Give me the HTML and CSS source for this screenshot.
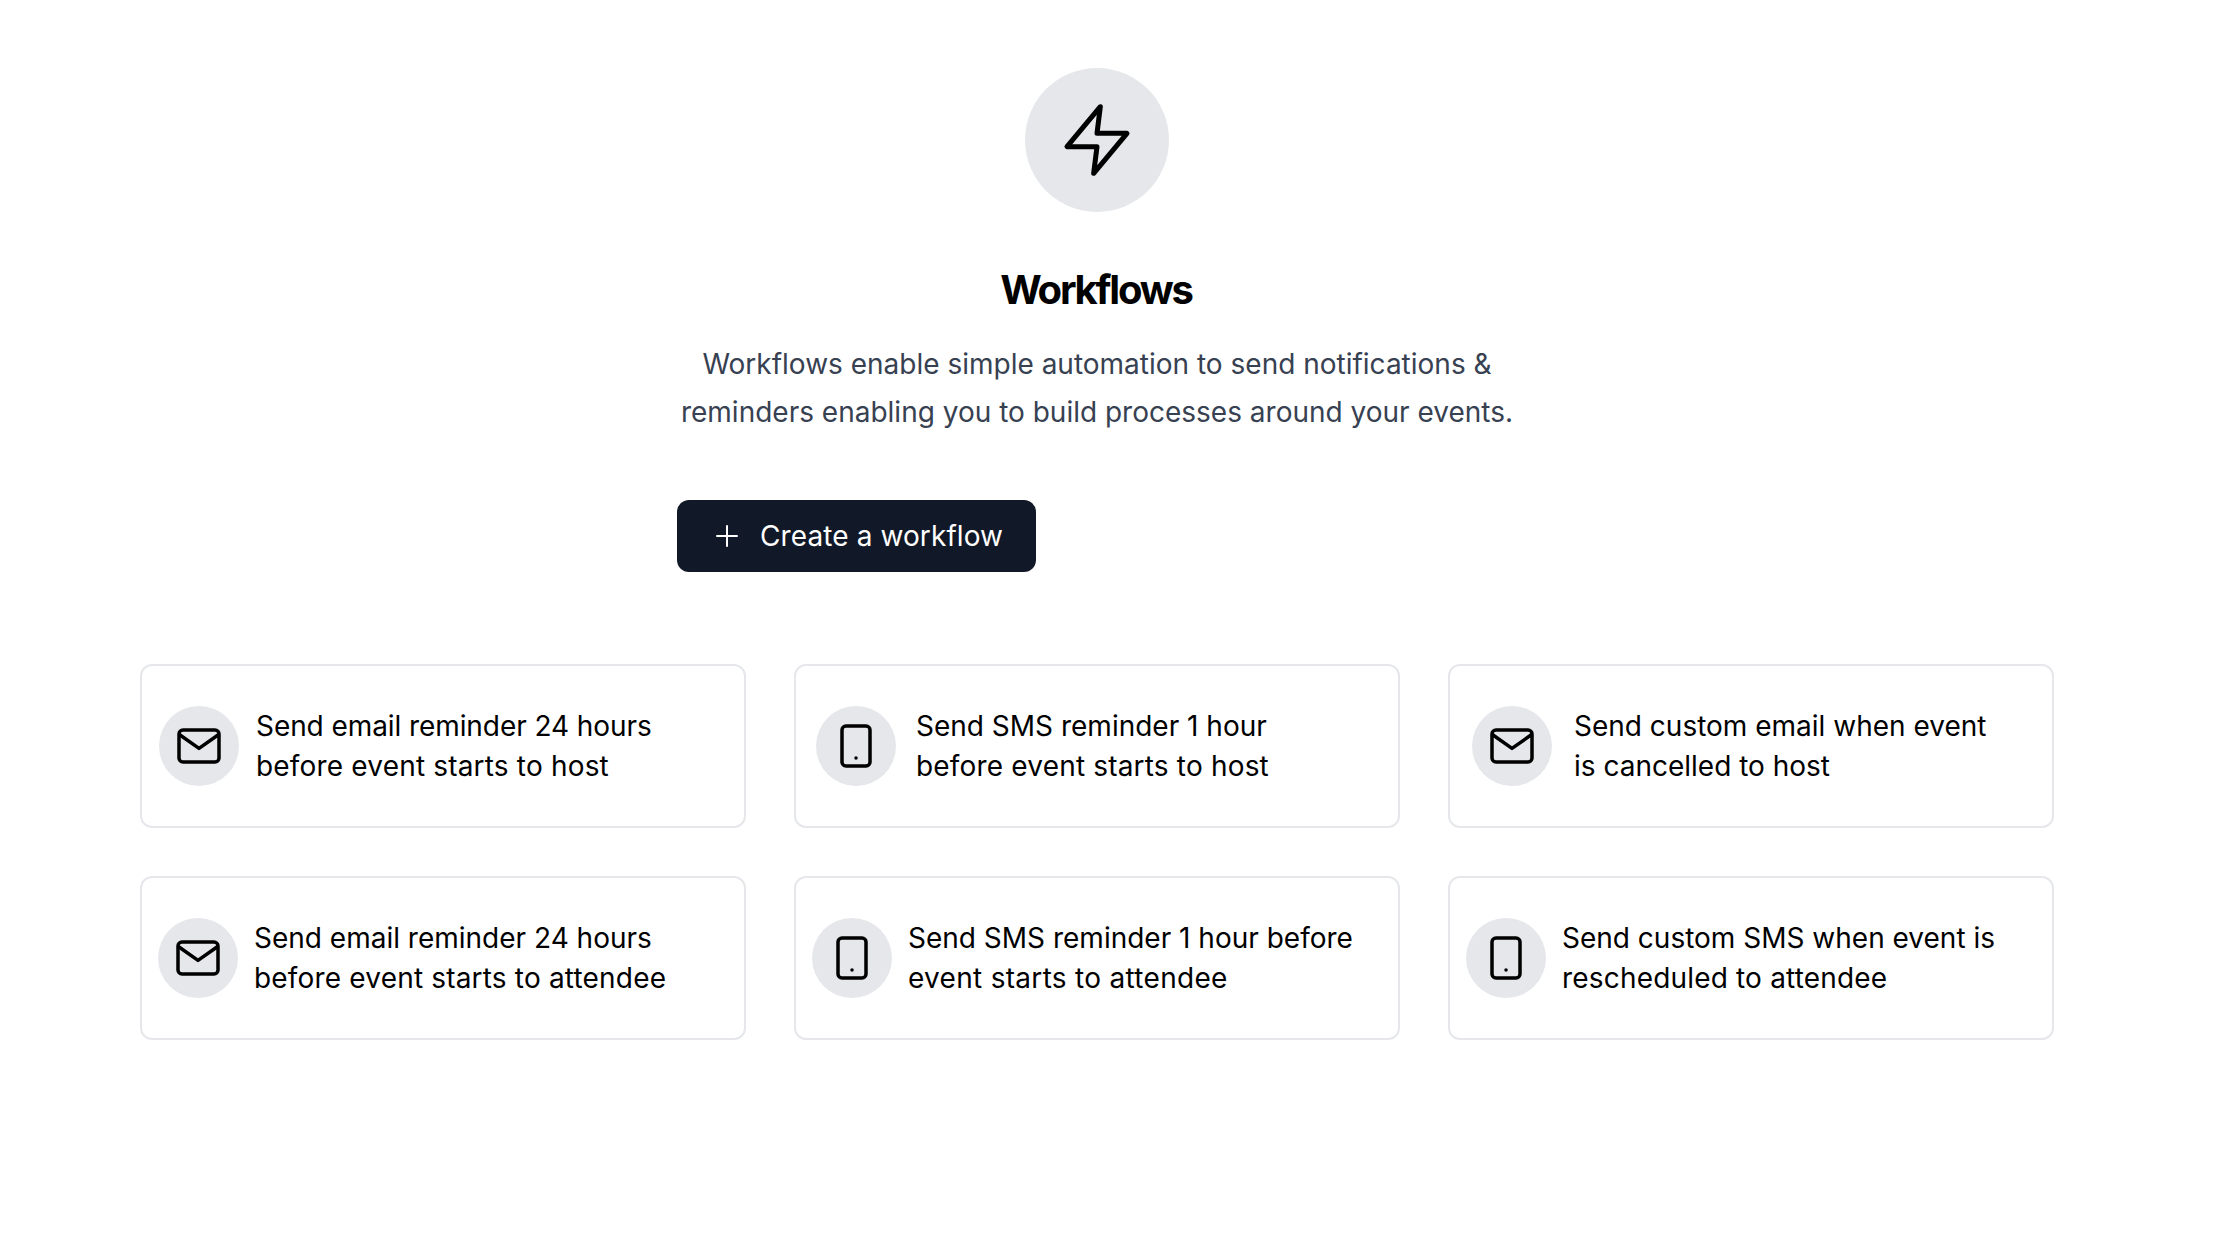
FILE: index.html
```html
<!DOCTYPE html>
<html lang="en">
<head>
<meta charset="utf-8">
<title>Workflows</title>
<link rel="stylesheet" href="styles.css">
</head>
<body>
<main class="page">
  <section class="hero">
    <div class="hero-icon">
      <svg class="icon-zap" viewBox="0 0 24 24"><path d="M13 2 3 14h9l-1 8 10-12h-9l1-8z"/></svg>
    </div>
    <h1 class="title">Workflows</h1>
    <p class="lead">Workflows enable simple automation to send notifications &amp;<br>reminders enabling you to build processes around your events.</p>
    <div class="actions">
      <button class="btn" type="button">
        <svg class="icon-plus" viewBox="0 0 24 24"><path d="M12 4.5v15M4.5 12h15"/></svg>
        <span>Create a workflow</span>
      </button>
    </div>
  </section>
  <section class="grid">
    <article class="card c1">
      <div class="badge"><svg class="icon" viewBox="0 0 24 24"><rect x="2" y="4" width="20" height="16" rx="2"/><path d="M2.5 6.5 12 13.2l9.5-6.7"/></svg></div>
      <p class="text"><span class="l1">Send email reminder 24 hours</span><br><span class="l2">before event starts to host</span></p>
    </article>
    <article class="card c2">
      <div class="badge"><svg class="icon" viewBox="0 0 24 24"><rect x="5" y="2" width="14" height="20" rx="2"/><path d="M12 18h.01"/></svg></div>
      <p class="text">Send SMS reminder 1 hour<br><span class="l2">before event starts to host</span></p>
    </article>
    <article class="card c3">
      <div class="badge"><svg class="icon" viewBox="0 0 24 24"><rect x="2" y="4" width="20" height="16" rx="2"/><path d="M2.5 6.5 12 13.2l9.5-6.7"/></svg></div>
      <p class="text">Send custom email when event<br>is cancelled to host</p>
    </article>
    <article class="card c4">
      <div class="badge"><svg class="icon" viewBox="0 0 24 24"><rect x="2" y="4" width="20" height="16" rx="2"/><path d="M2.5 6.5 12 13.2l9.5-6.7"/></svg></div>
      <p class="text">Send email reminder 24 hours<br><span class="l2">before event starts to attendee</span></p>
    </article>
    <article class="card c5">
      <div class="badge"><svg class="icon" viewBox="0 0 24 24"><rect x="5" y="2" width="14" height="20" rx="2"/><path d="M12 18h.01"/></svg></div>
      <p class="text">Send SMS reminder 1 hour before<br><span class="l2 l2-wide">event starts to attendee</span></p>
    </article>
    <article class="card c6">
      <div class="badge"><svg class="icon" viewBox="0 0 24 24"><rect x="5" y="2" width="14" height="20" rx="2"/><path d="M12 18h.01"/></svg></div>
      <p class="text">Send custom SMS when event is<br><span class="l2">rescheduled to attendee</span></p>
    </article>
  </section>
</main>
</body>
</html>
```
FILE: styles.css
```css
* { box-sizing: border-box; }
html, body { margin: 0; background: #fff; }
body { font-family: Inter, "Liberation Sans", sans-serif; color: #000; }
.page { width: 2194px; padding: 68px 140px 0; height: 1248px; overflow: hidden; }
.hero { display: flex; flex-direction: column; align-items: center; }
.hero-icon { width: 144px; height: 144px; border-radius: 50%; background: #e5e7eb; display: flex; align-items: center; justify-content: center; }
.icon-zap { width: 80px; height: 80px; fill: none; stroke: #000; stroke-width: 1.5; stroke-linecap: round; stroke-linejoin: round; }
.title { margin: 54px 0 0; padding-right: 2px; font-size: 40px; line-height: 48px; font-weight: 700; letter-spacing: -2.2px; }
.lead { margin: 26px 0 0; width: 840px; text-align: center; font-size: 28px; line-height: 48px; color: #374151; }
.actions { width: 840px; margin-top: 64px; display: flex; justify-content: flex-start; }
.btn { display: flex; align-items: center; height: 72px; width: 359px; padding: 0 0 0 34px; gap: 17px; border: 0; border-radius: 12px; background: #111827; color: #fff; font: 400 28px/40px Inter, sans-serif; letter-spacing: 0.1px; white-space: nowrap; }
.icon-plus { flex: none; width: 32px; height: 32px; fill: none; stroke: #fff; stroke-width: 1.5; stroke-linecap: round; }
.grid { margin-top: 92px; display: grid; grid-template-columns: repeat(3, 606px); gap: 48px; }
.card { height: 164px; border: 2px solid #e5e7eb; border-radius: 12px; background: #fff; display: flex; align-items: center; }
.badge { flex: none; width: 80px; height: 80px; border-radius: 50%; background: #e5e7eb; display: flex; align-items: center; justify-content: center; }
.icon { width: 48px; height: 48px; fill: none; stroke: #000; stroke-width: 1.75; stroke-linecap: round; stroke-linejoin: round; }
.text { margin: 0; font-size: 28px; line-height: 40px; color: #000; white-space: nowrap; }
.l1 { letter-spacing: -0.08px; }
.l2 { letter-spacing: 0.18px; }
.l2-wide { letter-spacing: 0.3px; }
.c1 { padding-left: 17px; gap: 17px; }
.c2 { padding-left: 20px; gap: 20px; }
.c3 { padding-left: 22px; gap: 22px; }
.c4 { padding-left: 16px; gap: 16px; }
.c5 { padding-left: 16px; gap: 16px; }
.c6 { padding-left: 16px; gap: 16px; }
```
